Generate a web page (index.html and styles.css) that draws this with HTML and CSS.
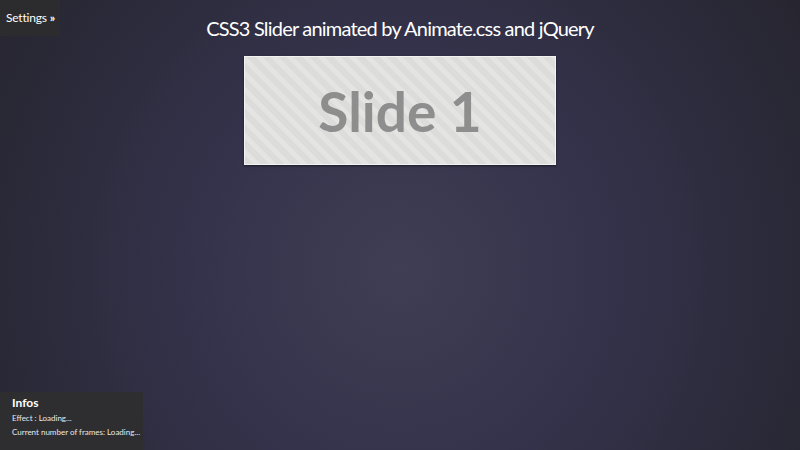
FILE: index.html
```html
<html>
  <head>
    <title>CSS3 Slider animated by Animate.css and jQuery</title>
    <link rel="stylesheet" href="styles.css">
  </head>
  <body>
    <div id='settings'>Settings <span class='arrows'>&raquo;</span></div>
    <h1>CSS3 Slider animated by Animate.css and jQuery</h1>
    <div id='slider'>
      <div class='slide'>Slide 1</div>
    </div>
    <div id='infos'>
      <h2>Infos</h2>
      <p>Effect : Loading...</p>
      <p>Current number of frames: Loading...</p>
    </div>
  </body>
</html>
```

FILE: styles.css
```css
      html, body { height: 100%; }
      body {
	  margin: 0;
	  font-family: Lato, "Noto Sans", sans-serif;
	  color: white;
	  background: radial-gradient(ellipse 60% 110% at 50% 60%, #403e55 0%, #33324a 45%, #26252f 100%);
	  background-color: #2a2939;
	  overflow: hidden;
      }
      h1 {
	  margin: 0;
	  padding-top: 16px;
	  font-size: 20px;
	  font-weight: normal;
	  letter-spacing: -0.8px;
	  text-align: center;
      }
      #settings {
	  position: absolute;
	  top: 0; left: 0;
	  width: 60px; height: 36px;
	  box-sizing: border-box;
	  padding: 10px 0 0 6px;
	  background: #2c2c2e;
	  font-size: 12px;
	  letter-spacing: -0.2px;
	  white-space: nowrap;
      }
      #settings .arrows { font-weight: bold; }
      #slider {
	  width: 310px;
	  height: 107px;
	  margin: 16px auto 0;
	  border: 1px solid #f2f2f2;
	  box-shadow: 0 1px 2px rgba(0,0,0,0.5);
      }
      .slide {
	  height: 100%;
	  display: flex;
	  align-items: center;
	  justify-content: center;
	  font-family: Lato, sans-serif;
	  font-weight: bold;
	  font-size: 55px;
	  color: #8e8e8e;
	  background: repeating-linear-gradient(45deg, #dcdcdb 0, #dcdcdb 6px, #e4e4e3 6px, #e4e4e3 11px);
      }
      #infos {
	  position: absolute;
	  left: 0; bottom: 0;
	  width: 143px; height: 58px;
	  box-sizing: border-box;
	  padding: 3px 0 0 12px;
	  background: #2e2e30;
	  white-space: nowrap;
      }
      #infos h2 {
	  margin: 0 0 3px;
	  font-size: 12px;
	  font-weight: bold;
      }
      #infos p {
	  margin: 0 0 4px;
	  font-size: 8px;
	  color: #e8e8e8;
      }
```
